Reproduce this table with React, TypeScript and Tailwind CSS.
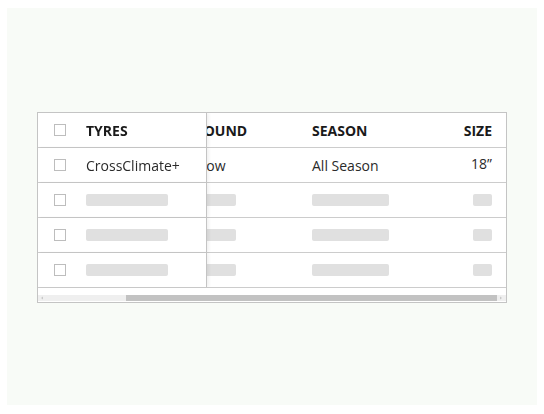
import { useLayoutEffect, useRef } from "react";

const font = { fontFamily: '"Open Sans", "Liberation Sans", sans-serif' };

function Checkbox() {
  return <span className="block w-3 h-3 shrink-0 border border-[#bdbdbd] bg-white" />;
}

function Bar({ w }: { w: string }) {
  return <span className={`block h-3 rounded-[2px] bg-[#e0e0e0] ${w}`} />;
}

type Row = { tyre?: string; sound?: string; season?: string; size?: string };

const rows: Row[] = [
  { tyre: "CrossClimate+", sound: "Low", season: "All Season", size: "18”" },
  {},
  {},
  {},
];

function TableRow({ row, header }: { row: Row; header?: boolean }) {
  const text = header ? "font-bold uppercase text-[#1a1a1a]" : "text-[#2a2a2a]";
  return (
    <div className={`flex h-[35px] border-b border-[#cccccc] text-[14px] ${text}`}>
      <div className="sticky left-0 z-10 flex w-[169px] shrink-0 items-center border-r border-[#c4c4c4] bg-white pl-4 shadow-[2px_0_3px_rgba(0,0,0,0.06)]">
        <Checkbox />
        <div className="ml-5">{row.tyre ?? <Bar w="w-[82px]" />}</div>
      </div>
      <div className={`flex w-[203px] shrink-0 items-center ${header ? "pl-[87px]" : "pl-[90px]"}`}>
        {row.sound ?? <Bar w="w-[37px]" />}
      </div>
      <div className="flex w-[120px] shrink-0 items-center">
        {row.season ?? <Bar w="w-[77px]" />}
      </div>
      <div className="flex flex-1 items-center justify-end pr-[14px]">
        {row.size ? <span className={header ? "" : "mb-1"}>{row.size}</span> : <Bar w="w-[19px]" />}
      </div>
    </div>
  );
}

function Arrow({ dir }: { dir: "left" | "right" }) {
  return (
    <span className="flex w-2 shrink-0 items-center justify-center">
      <svg width="4" height="4" viewBox="0 0 4 4">
        <path d={dir === "left" ? "M3 0.5 L1 2 L3 3.5 Z" : "M1 0.5 L3 2 L1 3.5 Z"} fill="#c8c8c8" />
      </svg>
    </span>
  );
}

// thin scrollbar, thumb pushed to the right end
function ScrollBar() {
  return (
    <div className="flex h-[14px] items-end pb-px">
      <div className="flex h-[6px] w-full bg-[#efefef]">
        <Arrow dir="left" />
        <span className="w-[80px] shrink-0" />
        <span className="w-[371px] shrink-0 bg-[#c2c2c2]" />
        <Arrow dir="right" />
      </div>
    </div>
  );
}

export default function App() {
  const scroller = useRef<HTMLDivElement>(null);

  useLayoutEffect(() => {
    const el = scroller.current;
    if (el) el.scrollLeft = el.scrollWidth;
  }, []);

  return (
    <div className="w-[544px] h-[414px] bg-white pt-2 pl-[7px] pr-[7px] pb-[9px]" style={font}>
      <div className="flex h-full items-center justify-center bg-[#f8fbf7]">
        <div className="mt-[2px] w-[470px] border border-[#c4c4c4] bg-white">
          <div ref={scroller} className="overflow-hidden">
            <div className="w-[566px]">
              <TableRow header row={{ tyre: "Tyres", sound: "Sound", season: "Season", size: "Size" }} />
              {rows.map((row, i) => (
                <TableRow key={i} row={row} />
              ))}
            </div>
          </div>
          <ScrollBar />
        </div>
      </div>
    </div>
  );
}
